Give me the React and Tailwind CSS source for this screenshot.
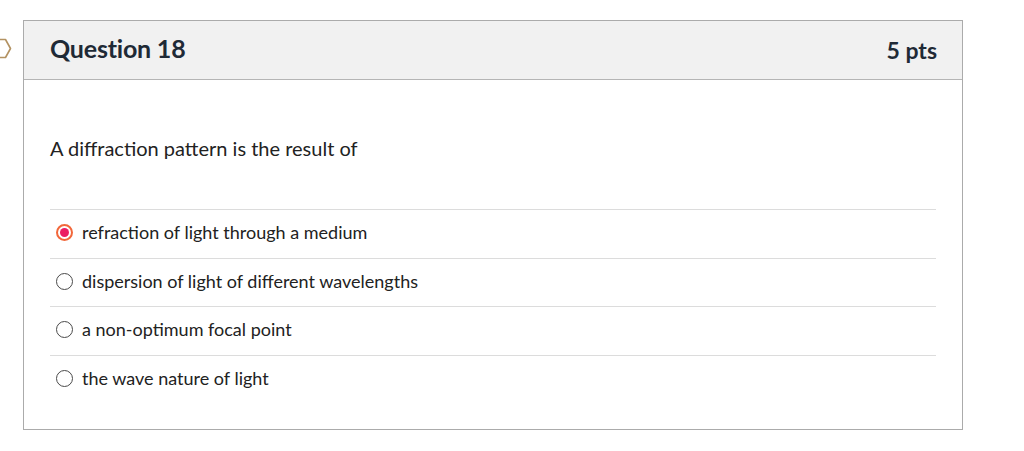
import React from 'react';

const answers = [
  { id: 'a', text: 'refraction of light through a medium', selected: true },
  { id: 'b', text: 'dispersion of light of different wavelengths' },
  { id: 'c', text: 'a non-optimum focal point' },
  { id: 'd', text: 'the wave nature of light' },
];

function Radio({ selected }) {
  if (selected) {
    return (
      <span className="w-[17px] h-[17px] rounded-full border-2 border-[#f2673a] bg-white flex items-center justify-center flex-shrink-0">
        <span className="w-[9px] h-[9px] rounded-full bg-[#eb1f63]" />
      </span>
    );
  }
  return (
    <span className="w-[17px] h-[17px] rounded-full border-[1.5px] border-[#4a4a4a] bg-white flex-shrink-0" />
  );
}

export default function App() {
  return (
    <div className="w-[1024px] h-[451px] bg-white flex pt-[20px] font-['Lato','Liberation_Sans',sans-serif] text-[#2d3b45]">
      {/* flag marker, cut off at the page edge */}
      <div className="w-[23px] flex-shrink-0 pt-[18px]">
        <svg width="12" height="21" viewBox="0 0 12 21" fill="none">
          <path d="M-6 1.5 H5.5 L10.5 10.5 L5.5 19.5 H-6" stroke="#b39262" strokeWidth="1.6" strokeLinejoin="round" />
        </svg>
      </div>

      <div className="w-[940px] h-[410px] border border-[#ababab] flex flex-col">
        {/* Header */}
        <div className="h-[59px] bg-[#f1f1f1] border-b border-[#b5b5b5] flex items-center justify-between pl-[26px] pr-[25px]">
          <h2 className="text-[25px] font-bold text-[#1f2a36] tracking-[-0.2px] mb-[2px]">Question 18</h2>
          <span className="text-[23px] font-bold text-[#1f2a36]">5 pts</span>
        </div>

        {/* Body */}
        <div className="px-[26px] pt-[55px]">
          <p className="text-[20px] leading-[27px] text-[#222] mb-[47px]">A diffraction pattern is the result of</p>

          <div className="border-t border-[#dcdcdc]">
            {answers.map((a, i) => (
              <label
                key={a.id}
                className={`h-[48.5px] flex items-center gap-[9px] pl-[6px] pb-[2px] ${
                  i < answers.length - 1 ? 'border-b border-[#dcdcdc]' : ''
                }`}
              >
                <Radio selected={a.selected} />
                <span className="text-[18px] text-[#222]">{a.text}</span>
              </label>
            ))}
          </div>
        </div>
      </div>
    </div>
  );
}
